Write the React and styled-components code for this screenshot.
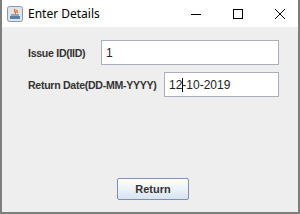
import React from "react";
import styled, { createGlobalStyle } from "styled-components";

const Global = createGlobalStyle`
  html, body { margin: 0; padding: 0; background: #fff; }
  body { font-family: "Liberation Sans", Arial, sans-serif; }
`;

const Window = styled.div`
  width: 300px;
  height: 214px;
  box-sizing: border-box;
  display: flex;
  flex-direction: column;
  background: #eeeeee;
  border-left: 2px solid #7e7e7e;
  border-right: 2px solid #7e7e7e;
  border-bottom: 2px solid #7e7e7e;
`;

const TitleBar = styled.div`
  height: 27px;
  flex-shrink: 0;
  display: flex;
  align-items: center;
  background: #ffffff;
  padding-left: 5px;
`;

const Title = styled.span`
  font-family: "Noto Sans", "Open Sans", sans-serif;
  font-size: 12px;
  color: #000;
  margin-left: 5px;
  margin-top: -1px;
`;

const Controls = styled.div`
  margin-left: auto;
  margin-right: -3px;
  display: flex;
  height: 100%;
`;

const Ctrl = styled.div`
  width: 42px;
  height: 100%;
  display: flex;
  align-items: center;
  justify-content: center;
`;

const Content = styled.div`
  flex: 1;
  display: flex;
  flex-direction: column;
  padding: 13px 19px 0 26px;
`;

const Row = styled.div`
  display: flex;
  align-items: center;
  justify-content: space-between;
  margin-bottom: ${(p) => p.gap || 0}px;
`;

const Label = styled.span`
  font-size: 10.6px;
  font-weight: bold;
  color: #333;
  white-space: nowrap;
  letter-spacing: -0.3px;
`;

const Field = styled.div`
  width: ${(p) => p.w}px;
  height: 25px;
  box-sizing: border-box;
  background: #fff;
  border: 1px solid #a9b0b8;
  display: flex;
  align-items: center;
  padding-left: 4px;
  font-size: 12px;
  color: #222;
  flex-shrink: 0;
`;

const Caret = styled.span`
  display: inline-block;
  width: 1px;
  height: 14px;
  background: #000;
  margin-right: -1px;
`;

const Footer = styled.div`
  margin-top: auto;
  display: flex;
  padding: 0 0 12px 89px;
`;

const Button = styled.button`
  width: 72px;
  height: 22px;
  box-sizing: border-box;
  border: 1px solid #7d92b0;
  border-radius: 2px;
  background: linear-gradient(#ffffff 0%, #eef3f9 45%, #d6e3f1 100%);
  font-family: "Liberation Sans", Arial, sans-serif;
  font-size: 11px;
  font-weight: bold;
  color: #333;
  padding: 0;
`;

const JavaIcon = () => (
  <svg width="16" height="16" viewBox="0 0 16 16">
    <rect x="0.5" y="0.5" width="15" height="15" rx="2" fill="#dfe4ea" stroke="#8b97a6" />
    <rect x="3" y="10" width="10" height="3" fill="#5b7fa8" />
    <path d="M8 3c-2 2 2 3 0 5M10 4c-1 1 1 2 0 3" stroke="#e0701e" strokeWidth="1.4" fill="none" />
    <path d="M4 9h8" stroke="#4a6b92" strokeWidth="1" />
  </svg>
);

export default function App() {
  return (
    <>
      <Global />
      <Window>
        <TitleBar>
          <JavaIcon />
          <Title>Enter Details</Title>
          <Controls>
            <Ctrl>
              <svg width="10" height="10" viewBox="0 0 10 10">
                <path d="M0 5.5h10" stroke="#000" strokeWidth="1" />
              </svg>
            </Ctrl>
            <Ctrl>
              <svg width="10" height="10" viewBox="0 0 10 10">
                <rect x="0.5" y="0.5" width="9" height="9" fill="none" stroke="#000" />
              </svg>
            </Ctrl>
            <Ctrl>
              <svg width="10" height="10" viewBox="0 0 10 10">
                <path d="M0 0L10 10M10 0L0 10" stroke="#000" strokeWidth="1" />
              </svg>
            </Ctrl>
          </Controls>
        </TitleBar>
        <Content>
          <Row gap={7}>
            <Label>Issue ID(IID)</Label>
            <Field w={178}>1</Field>
          </Row>
          <Row>
            <Label>Return Date(DD-MM-YYYY)</Label>
            <Field w={115}>
              12<Caret />-10-2019
            </Field>
          </Row>
          <Footer>
            <Button>Return</Button>
          </Footer>
        </Content>
      </Window>
    </>
  );
}
